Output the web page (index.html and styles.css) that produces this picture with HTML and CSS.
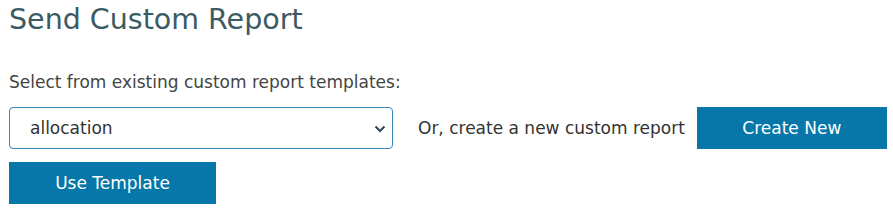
FILE: index.html
```html
<!DOCTYPE html>
<html>
<head>
    <title>send custom report</title>
    <link rel="stylesheet" href="styles.css">
</head>
<body>
    <div id="report">
        <h1 class="title">Send Custom Report</h1>
        <p class="label">Select from existing custom report templates:</p>
        <div class="row">
            <div class="select-wrap">
                <select class="select">
                    <option>allocation</option>
                </select>
                <svg class="chevron" width="12" height="8" viewBox="0 0 12 8">
                    <path d="M1.5 1.5 L6 6 L10.5 1.5" fill="none" stroke="#2f4a55" stroke-width="2"/>
                </svg>
            </div>
            <span class="or-text">Or, create a new custom report</span>
            <button class="btn btn-new">Create New</button>
        </div>
        <button class="btn btn-use">Use Template</button>
    </div>
</body>
</html>
```

FILE: styles.css
```css
:root {
    --blue: #0677a8;
    --title: #3c5a63;
    --text: #333333;
}

body {
    margin: 0;
    background-color: #ffffff;
}

* {
    font-family: "DejaVu Sans", sans-serif;
}

#report {
    padding: 1px 9px 0 9px;
}

.title {
    margin: 0;
    font-size: 28.5px;
    font-weight: normal;
    color: var(--title);
    line-height: 38px;
}

.label {
    margin: 32px 0 0 0;
    font-size: 17px;
    color: #444444;
    line-height: 22px;
}

.row {
    display: flex;
    align-items: center;
    margin-top: 14px;
}

.select-wrap {
    position: relative;
    flex-shrink: 0;
    width: 384px;
    height: 42px;
}

.select {
    appearance: none;
    width: 100%;
    height: 100%;
    border: 1px solid #3a86b8;
    border-radius: 4px;
    background: #ffffff;
    padding: 0 0 0 20px;
    font-size: 17px;
    color: var(--text);
}

.chevron {
    position: absolute;
    right: 7px;
    top: 18px;
    pointer-events: none;
}

.or-text {
    margin-left: 25px;
    white-space: nowrap;
    font-size: 17px;
    color: var(--text);
}

.btn {
    border: none;
    border-radius: 0;
    background-color: var(--blue);
    color: #ffffff;
    font-size: 17px;
    height: 42px;
}

.btn-new {
    flex-shrink: 0;
    margin-left: 12px;
    width: 190px;
}

.btn-use {
    margin-top: 13px;
    width: 207px;
}
```
